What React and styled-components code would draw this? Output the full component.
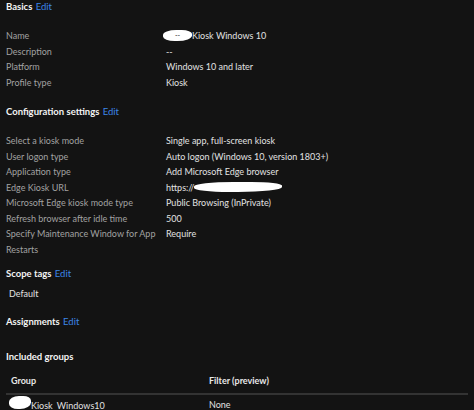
import React from 'react';
import styled, { createGlobalStyle } from 'styled-components';

const GlobalStyle = createGlobalStyle`
  html, body {
    margin: 0;
    background: #131313;
  }
  body {
    font-family: Lato, "Noto Sans", sans-serif;
    font-size: 9px;
    color: #dcdcdc;
    overflow: hidden;
  }
`;

const App = () => {
  const basics = [
    ['Name', <><Redaction $w={29} $h={11} $shift={-3}>--</Redaction>Kiosk Windows 10</>],
    ['Description', '--'],
    ['Platform', 'Windows 10 and later'],
    ['Profile type', 'Kiosk'],
  ];

  const config = [
    ['Select a kiosk mode', 'Single app, full-screen kiosk'],
    ['User logon type', 'Auto logon (Windows 10, version 1803+)'],
    ['Application type', 'Add Microsoft Edge browser'],
    ['Edge Kiosk URL', <>https://<Redaction $w={88} $h={10} /></>],
    ['Microsoft Edge kiosk mode type', 'Public Browsing (InPrivate)'],
    ['Refresh browser after idle time', '500'],
    ['Specify Maintenance Window for App Restarts', 'Require'],
  ];

  return (
    <Page>
      <GlobalStyle />
      <Heading>Basics <EditLink>Edit</EditLink></Heading>
      <Props $top={14}>
        {basics.map(([k, v]) => (
          <React.Fragment key={k}>
            <Label>{k}</Label>
            <Value>{v}</Value>
          </React.Fragment>
        ))}
      </Props>

      <Heading $top={15}>Configuration settings <EditLink>Edit</EditLink></Heading>
      <Props $top={14}>
        {config.map(([k, v]) => (
          <React.Fragment key={k}>
            <Label>{k}</Label>
            <Value>{v}</Value>
          </React.Fragment>
        ))}
      </Props>

      <Heading $top={10}>Scope tags <EditLink>Edit</EditLink></Heading>
      <Tag>Default</Tag>

      <Heading $top={13}>Assignments <EditLink>Edit</EditLink></Heading>
      <Heading $top={21}>Included groups</Heading>

      <Table>
        <thead>
          <tr>
            <Th $w={193}>Group</Th>
            <Th>Filter (preview)</Th>
          </tr>
        </thead>
        <tbody>
          <tr>
            <Td><Redaction $w={22} $h={13} $shift={-22} />Kiosk_Windows10</Td>
            <Td>None</Td>
          </tr>
        </tbody>
      </Table>
    </Page>
  );
};

const Page = styled.div`
  padding: 0 0 0 6px;
`;

const Heading = styled.div`
  margin-top: ${(p) => p.$top || 0}px;
  line-height: 14px;
  font-size: 9.5px;
  font-weight: 700;
  color: #f4f4f4;
`;

const EditLink = styled.span`
  font-weight: 400;
  color: #3c86e8;
  margin-left: 1px;
`;

const Props = styled.div`
  display: grid;
  grid-template-columns: 160px 1fr;
  margin-top: ${(p) => p.$top || 0}px;
  line-height: 15.5px;
`;

const Label = styled.div`
  color: #a2a2a2;
  padding-right: 10px;
`;

const Value = styled.div`
  color: #e2e2e2;
  display: flex;
  align-items: center;
  height: 15.5px;
`;

const Redaction = styled.span`
  display: inline-flex;
  align-items: center;
  justify-content: center;
  width: ${(p) => p.$w}px;
  height: ${(p) => p.$h}px;
  background: #fff;
  color: #222;
  font-size: 7px;
  border-radius: 45% 35% 50% 40%;
  margin-left: ${(p) => p.$shift || 0}px;
  margin-right: 0;
`;

const Tag = styled.div`
  margin-top: 5px;
  padding-left: 3px;
  line-height: 15.5px;
  color: #e2e2e2;
`;

const Table = styled.table`
  margin-top: 9px;
  width: calc(100% - 6px);
  border-collapse: collapse;
  line-height: 15.5px;
`;

const Th = styled.th`
  text-align: left;
  font-weight: 700;
  color: #e8e8e8;
  padding: 0 0 5px 5px;
  width: ${(p) => (p.$w ? `${p.$w}px` : 'auto')};
  border-bottom: 2px solid #333;
`;

const Td = styled.td`
  padding: 1px 0 0 5px;
  color: #e2e2e2;
  white-space: nowrap;
  &:first-child {
    padding-left: 25px;
  }
`;

export default App;
